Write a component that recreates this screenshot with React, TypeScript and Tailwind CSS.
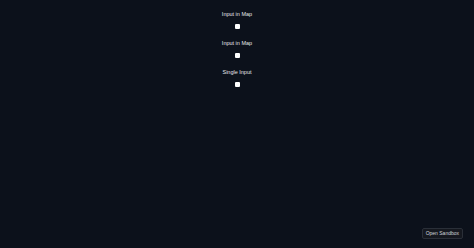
const items = ["Input in Map", "Input in Map", "Single Input"];

export default function App() {
  return (
    <div
      className="relative min-h-screen w-full bg-[#0c111b] text-white"
      style={{ fontFamily: '"Liberation Sans", Arial, sans-serif' }}
    >
      <div className="flex flex-col items-center pt-[11px] gap-[11px]">
        {items.map((label, i) => (
          <div key={i} className="flex flex-col items-center gap-[7px]">
            <span className="text-[5.5px] leading-[6px] text-[#e5e7eb]">{label}</span>
            <input
              type="checkbox"
              className="appearance-none w-[5px] h-[5px] bg-white rounded-[1px] m-0 ml-[1px]"
            />
          </div>
        ))}
      </div>

      {/* Floating sandbox button */}
      <button className="fixed right-[11px] bottom-[9px] h-[11px] px-[3px] rounded-[2px] border border-[#2a2f38] bg-[#15181f] text-[5px] leading-[9px] text-[#d1d5db]">
        Open Sandbox
      </button>
    </div>
  );
}
